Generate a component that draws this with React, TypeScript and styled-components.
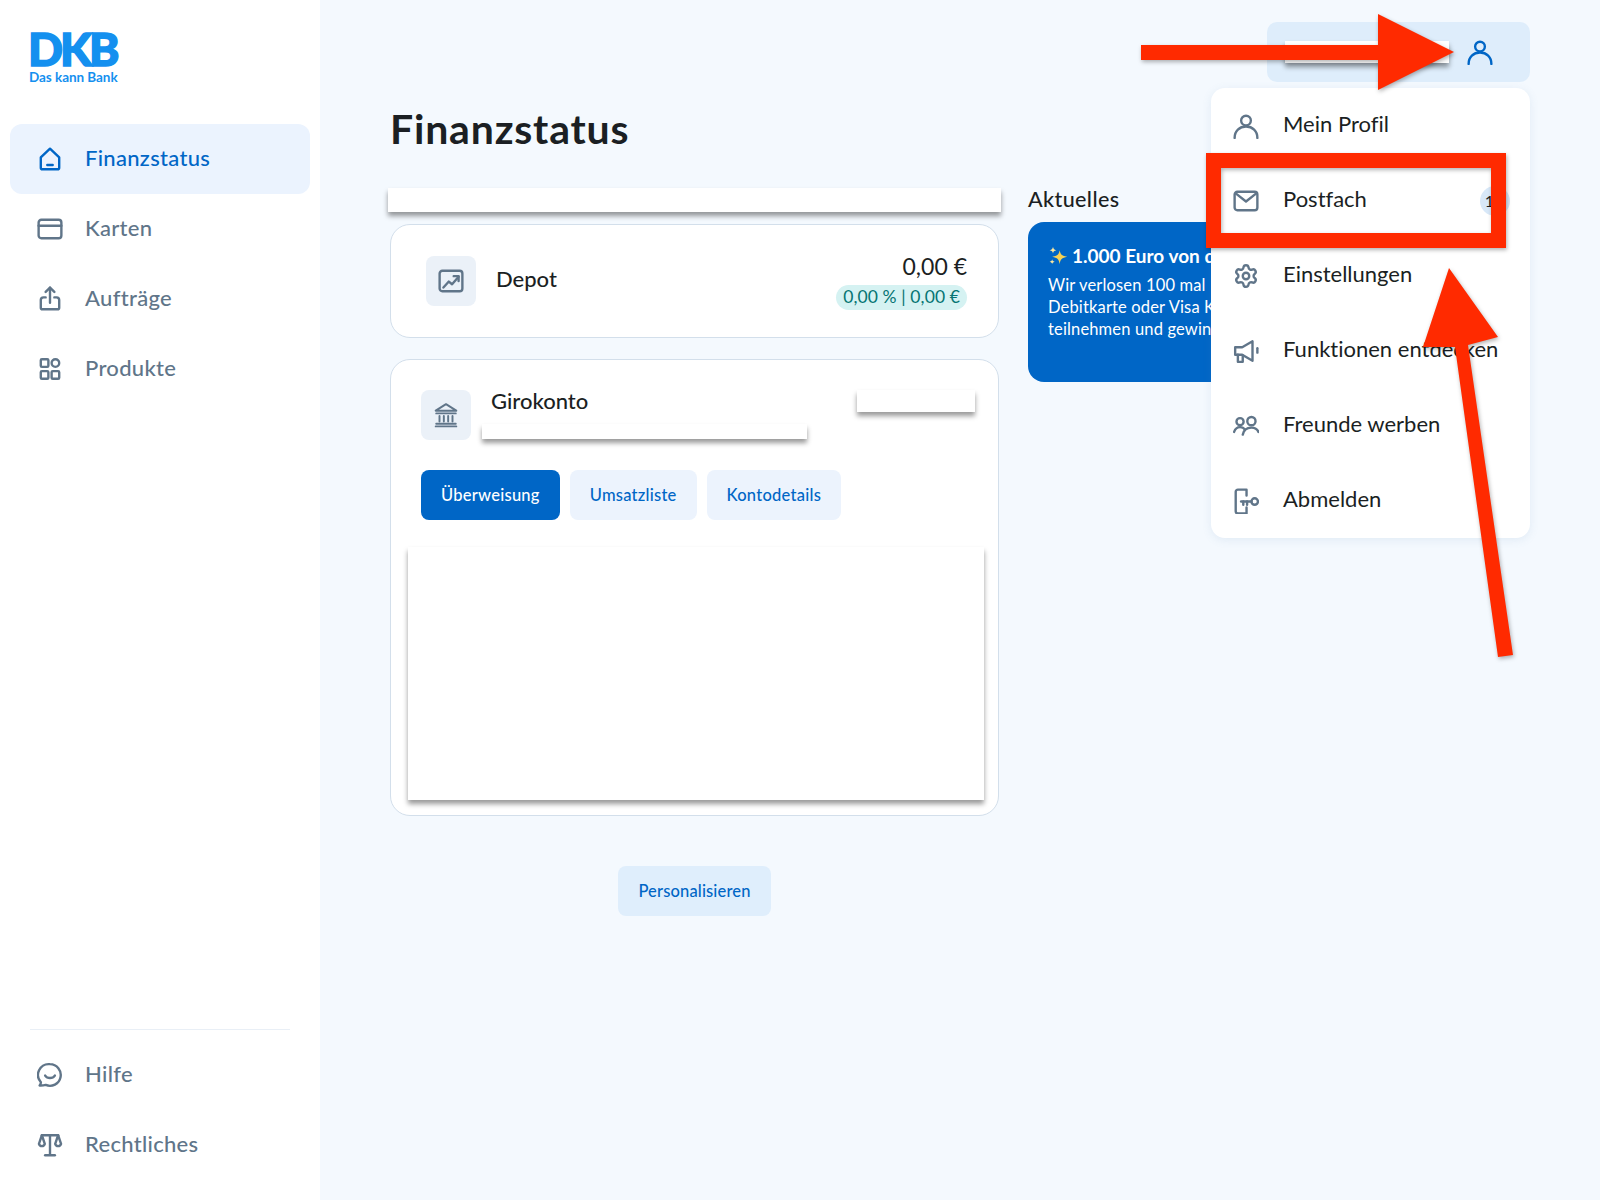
import React from "react";
import styled, { createGlobalStyle } from "styled-components";
import { Settings } from "lucide-react";

const GlobalStyle = createGlobalStyle`
  * {
    margin: 0;
    padding: 0;
    box-sizing: border-box;
  }
  body {
    background: #f4f9fe;
    color: #1b1f23;
    font-family: "Lato", "Noto Sans", sans-serif;
    font-variant-ligatures: none;
  }
`;

const Page = styled.div`
  position: relative;
  display: grid;
  grid-template-columns: 320px 1fr;
  width: 1600px;
  height: 1200px;
  overflow: hidden;
`;

const Sidebar = styled.aside`
  display: flex;
  flex-direction: column;
  height: 1200px;
  padding: 0 10px 20px;
  background: #ffffff;
`;

const Logo = styled.div`
  height: 124px;
  padding: 31px 0 0 20px;
  color: #1490ef;
`;

const LogoMark = styled.svg`
  display: block;
  width: 92px;
  height: 36px;
  overflow: visible;
  fill: #1490ef;
  stroke: #1490ef;
  stroke-width: 1.5px;
  font-size: 46px;
  font-weight: 900;
  letter-spacing: -3px;
`;

const LogoClaim = styled.div`
  margin: 2px 0 0 -1px;
  font-size: 13.5px;
  line-height: 16px;
  font-weight: 700;
  letter-spacing: -0.05px;
`;

const Nav = styled.nav`
  display: flex;
  flex-direction: column;
`;

const NavItem = styled.a<{ $active?: boolean }>`
  display: flex;
  align-items: center;
  gap: 22px;
  height: 70px;
  padding-left: 27px;
  border-radius: 12px;
  font-size: 22px;
  font-weight: 500;
  color: ${(p) => (p.$active ? "#0066c6" : "#607589")};
  background: ${(p) => (p.$active ? "#ebf3fe" : "transparent")};
`;

const NavLabel = styled.span`
  margin-bottom: 4px;
  letter-spacing: 0.3px;
`;

const Divider = styled.div`
  height: 1px;
  margin: auto 20px 10px;
  background: #e9eff6;
`;

const Main = styled.main`
  display: flex;
  flex-direction: column;
  padding: 22px 70px 0;
`;

const Header = styled.header`
  position: relative;
  display: flex;
  justify-content: flex-end;
`;

const AccountButton = styled.div`
  display: flex;
  align-items: center;
  width: 263px;
  height: 60px;
  padding-left: 18px;
  gap: 18px;
  border-radius: 10px;
  color: #0066c6;
  background: #deedfb;
`;

const Menu = styled.div`
  position: absolute;
  z-index: 2;
  top: 66px;
  right: 0;
  width: 319px;
  border-radius: 14px;
  background: #ffffff;
  box-shadow: 0 2px 10px rgba(90, 130, 180, 0.12);
`;

const MenuItem = styled.div`
  display: flex;
  align-items: center;
  gap: 24px;
  height: 75px;
  padding: 0 20px 0 22px;
  font-size: 22px;
  color: #607589;
  white-space: nowrap;
`;

const MenuLabel = styled.span`
  flex: 1;
  margin-bottom: 4px;
  color: #1b1f23;
`;

const CountBadge = styled.span`
  display: flex;
  align-items: center;
  justify-content: center;
  width: 30px;
  height: 30px;
  padding-right: 11px;
  border-radius: 50%;
  font-size: 16px;
  color: #1b1f23;
  background: #d8e8f8;
`;

const Title = styled.h1`
  margin-top: 24px;
  font-size: 41px;
  line-height: 46px;
  font-weight: 700;
  letter-spacing: 0.8px;
`;

const Columns = styled.div`
  display: grid;
  grid-template-columns: 609px 502px;
  column-gap: 29px;
  margin-top: 36px;
`;

const LeftColumn = styled.div`
  display: flex;
  flex-direction: column;
`;

const Redaction = styled.div<{ $w: string; $h: number }>`
  flex: none;
  width: ${(p) => p.$w};
  height: ${(p) => p.$h}px;
  background: #ffffff;
  box-shadow: 0 4px 5px rgba(0, 0, 0, 0.4);
`;

const TopRedaction = styled(Redaction)`
  margin: 0 0 12px -2px;
`;

const Card = styled.section`
  border: 1.5px solid #d3dfeb;
  border-radius: 20px;
  background: #ffffff;
`;

const DepotCard = styled(Card)`
  display: flex;
  align-items: center;
  height: 114px;
  padding: 0 31px 0 35px;
`;

const IconBox = styled.div`
  display: flex;
  flex: none;
  align-items: center;
  justify-content: center;
  width: 50px;
  height: 50px;
  border-radius: 8px;
  color: #607589;
  background: #ebf1f8;
`;

const AccountName = styled.div`
  margin: 0 0 4px 20px;
  font-size: 22px;
  line-height: 26px;
  font-weight: 500;
`;

const Amounts = styled.div`
  display: flex;
  flex-direction: column;
  align-items: flex-end;
  gap: 6px;
  margin-left: auto;
`;

const Amount = styled.div`
  font-size: 23px;
  line-height: 26px;
`;

const ChangePill = styled.div`
  height: 25px;
  padding: 0 7px;
  border-radius: 13px;
  font-size: 17.5px;
  line-height: 24px;
  letter-spacing: 0.1px;
  color: #067573;
  background: #d5f2f2;
`;

const GiroCard = styled(Card)`
  display: flex;
  flex-direction: column;
  height: 457px;
  margin-top: 21px;
  padding: 30px 0 0 30px;
`;

const GiroHeader = styled.div`
  display: flex;
  height: 50px;
`;

const GiroNames = styled.div`
  display: flex;
  flex-direction: column;
  margin-left: 11px;
`;

const GiroName = styled(AccountName)`
  margin: -2px 0 10px 9px;
`;

const RightRedaction = styled(Redaction)`
  margin-left: 50px;
`;

const Actions = styled.div`
  display: flex;
  gap: 10px;
  margin-top: 30px;
`;

const Action = styled.button<{ $primary?: boolean }>`
  height: 50px;
  padding: 0 20px;
  border: none;
  border-radius: 8px;
  font-family: inherit;
  font-size: 16.5px;
  font-weight: 500;
  letter-spacing: 0.25px;
  color: ${(p) => (p.$primary ? "#ffffff" : "#0066c6")};
  background: ${(p) => (p.$primary ? "#0066c6" : "#ecf3fd")};
`;

const LargeRedaction = styled(Redaction)`
  margin: 27px 0 0 -13px;
`;

const Personalize = styled(Action)`
  align-self: center;
  width: 153px;
  margin-top: 50px;
  padding: 0;
  letter-spacing: 0.15px;
  color: #0066c6;
  background: #dfeefc;
`;

const SectionTitle = styled.h2`
  margin: -2px 0 10px;
  font-size: 21.5px;
  line-height: 26px;
  font-weight: 500;
  letter-spacing: 0.4px;
`;

const Teaser = styled.div`
  height: 160px;
  padding: 22px 20px;
  border-radius: 16px;
  font-size: 16.5px;
  line-height: 22px;
  letter-spacing: 0.15px;
  white-space: nowrap;
  color: #ffffff;
  background: #0066c6;
`;

const TeaserTitle = styled.div`
  display: flex;
  align-items: center;
  gap: 4px;
  margin-bottom: 6px;
  font-size: 19px;
  line-height: 24px;
  font-weight: 700;
  letter-spacing: 0;
`;

const RedBox = styled.div`
  position: absolute;
  z-index: 3;
  top: 153px;
  left: 1206px;
  width: 300px;
  height: 95px;
  border: 15px solid #ff2a00;
  box-shadow: 1px 2px 4px rgba(0, 0, 0, 0.3), inset 1px 2px 4px rgba(0, 0, 0, 0.3);
`;

const Annotation = styled.svg`
  position: absolute;
  z-index: 3;
  top: 0;
  left: 0;
  filter: drop-shadow(1px 2px 2px rgba(0, 0, 0, 0.3));
`;

const Icon = ({ children, size = 26 }: { children: React.ReactNode; size?: number }) => (
  <svg
    width={size}
    height={size}
    viewBox="0 0 24 24"
    fill="none"
    stroke="currentColor"
    strokeWidth="2.2"
    strokeLinecap="round"
    strokeLinejoin="round"
    style={{ flex: "none" }}
  >
    {children}
  </svg>
);

const HomeIcon = () => (
  <Icon>
    <path d="M3.5 10.5 12 2.5l8.5 8V20a1.5 1.5 0 0 1-1.5 1.5H5A1.5 1.5 0 0 1 3.5 20Z" />
    <path d="M9.5 17.5h5" />
  </Icon>
);
const CardIcon = () => (
  <Icon>
    <rect x="1.5" y="3.5" width="21" height="17" rx="2.5" />
    <path d="M1.5 9h21" />
  </Icon>
);
const UploadIcon = () => (
  <Icon>
    <path d="M8 10.5H6A2.5 2.5 0 0 0 3.5 13v7A1.5 1.5 0 0 0 5 21.5h14a1.5 1.5 0 0 0 1.5-1.5v-7a2.5 2.5 0 0 0-2.5-2.5h-2" />
    <path d="M12 15.5V1.5" />
    <path d="M8 5.5l4-4 4 4" />
  </Icon>
);
const GridIcon = () => (
  <Icon>
    <rect x="3.5" y="3" width="7" height="7" rx="1" />
    <circle cx="17" cy="6.5" r="3.5" />
    <rect x="3.5" y="14" width="7" height="7" rx="1" />
    <rect x="13.5" y="14" width="7" height="7" rx="1" />
  </Icon>
);
const HelpIcon = () => (
  <Icon>
    <path d="M12 2a10 10 0 1 1-4 19.2c-1.6.4-3.5.6-5.6.5.8-.9 1.2-2 1.2-3A10 10 0 0 1 12 2Z" />
    <path d="M7.5 12.5c2 3 7 3 9 0" />
  </Icon>
);
const ScaleIcon = () => (
  <Icon>
    <path d="M4.5 3h15" />
    <path d="M12 3v18" />
    <path d="M7.5 21.5h9" />
    <path d="M4.5 3 1.8 11a2.8 2.8 0 0 0 5.4 0Z" />
    <path d="M19.5 3l-2.7 8a2.8 2.8 0 0 0 5.4 0Z" />
  </Icon>
);
const PersonIcon = () => (
  <Icon>
    <circle cx="12" cy="7" r="4.5" />
    <path d="M1.5 23c0-6.5 4.5-10.5 10.5-10.5S22.5 16.5 22.5 23" />
  </Icon>
);
const MailIcon = () => (
  <Icon>
    <rect x="1.5" y="3.5" width="21" height="17" rx="2.5" />
    <path d="M2.5 5 12 12.5 21.5 5" />
  </Icon>
);
const GearIcon = () => <Settings size={26} strokeWidth={2.2} />;
const MegaphoneIcon = () => (
  <Icon>
    <path d="M2 8.5h6.5L18 3v18l-9.5-5.5H2Z" />
    <path d="M4.5 15.5V22H9v-6" />
    <path d="M22.5 9.5v4" />
  </Icon>
);
const FriendsIcon = () => (
  <Icon>
    <circle cx="6.5" cy="8" r="3.3" />
    <circle cx="17" cy="7.5" r="3.8" />
    <path d="M1 17.5c1-3 3-4.5 5.5-4.5 2 0 3.5.8 4.5 2.3" />
    <path d="M9 20c.8-4 4-6.5 8-6.5 3 0 5.5 1.5 6.5 4" />
  </Icon>
);
const LogoutIcon = () => (
  <Icon>
    <path d="M12.5 7V1.5h-8a2 2 0 0 0-2 2v18a2 2 0 0 0 2 2h8V18" />
    <circle cx="20" cy="12.5" r="3" />
    <path d="M7.5 12.5H17" />
    <path d="M9.5 12.5v3" />
    <path d="M13 12.5v3" />
  </Icon>
);
const DepotIcon = () => (
  <Icon>
    <rect x="1.5" y="2.5" width="21" height="19" rx="2.5" />
    <path d="M5 18l5-5.5 3 2.5 6-7" />
    <path d="M14.5 7.5H19V12" />
  </Icon>
);
const BankIcon = () => (
  <Icon>
    <path d="M12 2 2.5 8h19Z" strokeWidth="1.8" />
    <path d="M3 10.5h18" strokeWidth="1.8" />
    <path d="M6 13v5M10 13v5M14 13v5M18 13v5" strokeWidth="1.8" />
    <path d="M3 20h18" strokeWidth="1.8" />
    <path d="M2.5 22.5h19" strokeWidth="1.8" />
  </Icon>
);
const Sparkles = () => (
  <svg width="20" height="20" viewBox="0 0 24 24" style={{ flex: "none" }}>
    <path d="M14 5c.8 5 2.5 6.7 9 8-6.5 1.3-8.2 3-9 9-.8-6-2.5-7.7-9-9 6.5-1.3 8.2-3 9-8Z" fill="#f7d154" />
    <path d="M6 1c.4 2.6 1.2 3.4 4 4-2.8.6-3.6 1.4-4 4-.4-2.6-1.2-3.4-4-4 2.8-.6 3.6-1.4 4-4Z" fill="#fbe7a0" />
    <path d="M5 16c.3 1.8.8 2.3 3 3-2.2.7-2.7 1.2-3 3-.3-1.8-.8-2.3-3-3 2.2-.7 2.7-1.2 3-3Z" fill="#fbe7a0" />
  </svg>
);

const App = () => {
  return (
    <Page>
      <GlobalStyle />
      <Sidebar>
        <Logo>
          <LogoMark viewBox="0 0 92 36">
            <text x="-2" y="35">DKB</text>
          </LogoMark>
          <LogoClaim>Das kann Bank</LogoClaim>
        </Logo>
        <Nav>
          <NavItem $active>
            <HomeIcon />
            <NavLabel>Finanzstatus</NavLabel>
          </NavItem>
          <NavItem>
            <CardIcon />
            <NavLabel>Karten</NavLabel>
          </NavItem>
          <NavItem>
            <UploadIcon />
            <NavLabel>Aufträge</NavLabel>
          </NavItem>
          <NavItem>
            <GridIcon />
            <NavLabel>Produkte</NavLabel>
          </NavItem>
        </Nav>
        <Divider />
        <Nav>
          <NavItem>
            <HelpIcon />
            <NavLabel>Hilfe</NavLabel>
          </NavItem>
          <NavItem>
            <ScaleIcon />
            <NavLabel>Rechtliches</NavLabel>
          </NavItem>
        </Nav>
      </Sidebar>

      <Main>
        <Header>
          <AccountButton>
            <Redaction $w="164px" $h={22} />
            <PersonIcon />
          </AccountButton>
          <Menu>
            <MenuItem>
              <PersonIcon />
              <MenuLabel>Mein Profil</MenuLabel>
            </MenuItem>
            <MenuItem>
              <MailIcon />
              <MenuLabel>Postfach</MenuLabel>
              <CountBadge>1</CountBadge>
            </MenuItem>
            <MenuItem>
              <GearIcon />
              <MenuLabel>Einstellungen</MenuLabel>
            </MenuItem>
            <MenuItem>
              <MegaphoneIcon />
              <MenuLabel>Funktionen entdecken</MenuLabel>
            </MenuItem>
            <MenuItem>
              <FriendsIcon />
              <MenuLabel>Freunde werben</MenuLabel>
            </MenuItem>
            <MenuItem>
              <LogoutIcon />
              <MenuLabel>Abmelden</MenuLabel>
            </MenuItem>
          </Menu>
        </Header>

        <Title>Finanzstatus</Title>

        <Columns>
          <LeftColumn>
            <TopRedaction $w="613px" $h={24} />
            <DepotCard>
              <IconBox>
                <DepotIcon />
              </IconBox>
              <AccountName>Depot</AccountName>
              <Amounts>
                <Amount>0,00 €</Amount>
                <ChangePill>0,00 % | 0,00 €</ChangePill>
              </Amounts>
            </DepotCard>
            <GiroCard>
              <GiroHeader>
                <IconBox>
                  <BankIcon />
                </IconBox>
                <GiroNames>
                  <GiroName>Girokonto</GiroName>
                  <Redaction $w="325px" $h={15} />
                </GiroNames>
                <RightRedaction $w="118px" $h={22} />
              </GiroHeader>
              <Actions>
                <Action $primary>Überweisung</Action>
                <Action>Umsatzliste</Action>
                <Action>Kontodetails</Action>
              </Actions>
              <LargeRedaction $w="576px" $h={253} />
            </GiroCard>
            <Personalize>Personalisieren</Personalize>
          </LeftColumn>

          <div>
            <SectionTitle>Aktuelles</SectionTitle>
            <Teaser>
              <TeaserTitle>
                <Sparkles />
                1.000 Euro von der DKB
              </TeaserTitle>
              <div>Wir verlosen 100 mal 1.000 Euro</div>
              <div>Debitkarte oder Visa Kreditkarte</div>
              <div>teilnehmen und gewinnen</div>
            </Teaser>
          </div>
        </Columns>
      </Main>

      <RedBox />
      <Annotation width="1600" height="1200" viewBox="0 0 1600 1200">
        <path d="M1141 45H1378V14L1454 52 1378 90V60H1141Z" fill="#ff2a00" />
        <path d="M1449 268 1498 337 1468 345 1513 655 1498 657 1455 347 1423 347Z" fill="#ff2a00" />
      </Annotation>
    </Page>
  );
};

export default App;
